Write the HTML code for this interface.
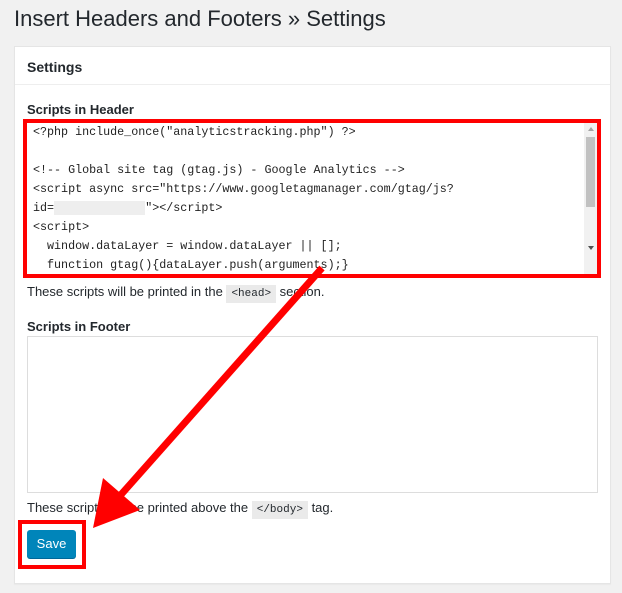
<!DOCTYPE html>
<html><head><style>
body{margin:0;background:#f1f1f1;font-family:"Liberation Sans",sans-serif;width:622px;height:593px;position:relative;overflow:hidden;color:#23282d}
.abs{position:absolute}
h1{position:absolute;left:14px;top:6px;margin:0;font-weight:400;font-size:22px;color:#23282d}
.panel{left:14px;top:46px;width:595px;height:536px;background:#fff;border:1px solid #e5e5e5;box-shadow:0 1px 1px rgba(0,0,0,.04)}
.lbl{font-size:13px;color:#23282d}
code{background:#eaeaea;font-family:"Liberation Mono",monospace;font-size:11px;padding:3px 5px}
pre{margin:0;font-family:"Liberation Mono",monospace;font-size:11.7px;line-height:19px;color:#222}
</style></head><body>
<h1>Insert Headers and Footers » Settings</h1>
<div class="abs panel"></div>
<div class="abs lbl" style="left:27px;top:59px;font-weight:600;font-size:14px">Settings</div>
<div class="abs" style="left:15px;top:84px;width:595px;height:1px;background:#eee"></div>
<div class="abs lbl" style="left:27px;top:102px;font-weight:600;font-size:13px">Scripts in Header</div>
<div class="abs" style="left:23px;top:119px;width:570px;height:151px;border:4px solid #f00;background:#fff;overflow:hidden">
<pre style="position:absolute;left:6px;top:0px">&lt;?php include_once("analyticstracking.php") ?&gt;

&lt;!-- Global site tag (gtag.js) - Google Analytics --&gt;
&lt;script async src="https://www.googletagmanager.com/gtag/js?
id=<span style="background:#eee;color:#eee">UA-XXXXXXXX-X</span>"&gt;&lt;/script&gt;
&lt;script&gt;
  window.dataLayer = window.dataLayer || [];
  function gtag(){dataLayer.push(arguments);}</pre>
<div class="abs" style="right:0;top:0;width:13px;height:151px;background:#f1f1f1"></div>
<div class="abs" style="right:2px;top:14px;width:9px;height:70px;background:#c1c1c1"></div>
<div class="abs" style="right:3px;top:4px;width:0;height:0;border:3px solid transparent;border-bottom:4px solid #a3a3a3;border-top:0"></div>
<div class="abs" style="right:3px;top:123px;width:0;height:0;border:3px solid transparent;border-top:4px solid #505050;border-bottom:0"></div>
</div>
<div class="abs lbl" style="left:27px;top:284px">These scripts will be printed in the <code>&lt;head&gt;</code> section.</div>
<div class="abs lbl" style="left:27px;top:319px;font-weight:600">Scripts in Footer</div>
<div class="abs" style="left:27px;top:336px;width:569px;height:155px;border:1px solid #ddd;background:#fff"></div>
<div class="abs lbl" style="left:27px;top:500px">These scripts will be printed above the <code>&lt;/body&gt;</code> tag.</div>
<div class="abs" style="left:18px;top:520px;width:60px;height:41px;border:4px solid #f00"></div>
<div class="abs" style="left:27px;top:530px;width:49px;height:28px;background:#0085ba;border-radius:3px;box-shadow:0 1px 0 #006799;color:#fff;font-size:13px;line-height:28px;text-align:center">Save</div>
<svg class="abs" style="left:0;top:0" width="622" height="593">
<line x1="322" y1="268" x2="118" y2="498" stroke="#f00" stroke-width="7"/>
<polygon points="93,528 103,478 140,510" fill="#f00"/>
</svg>
</body></html>
